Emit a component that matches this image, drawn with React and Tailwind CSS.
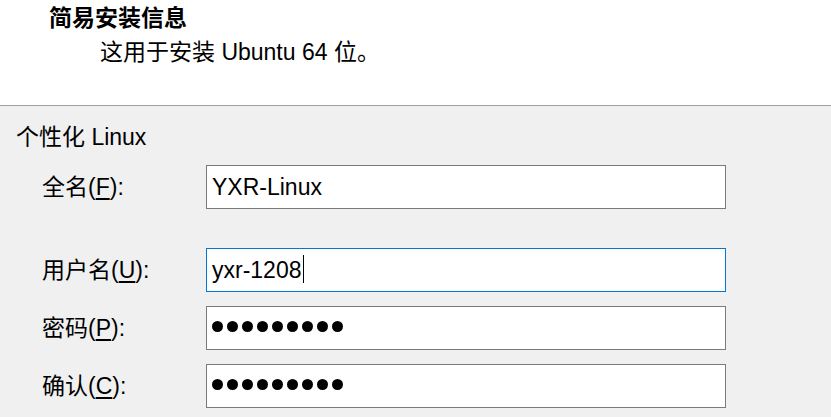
import React from 'react';

const font = { fontFamily: '"Liberation Sans", "Noto Sans CJK SC", sans-serif' };

const Dots = () => (
  <div className="flex items-center gap-[4px] pl-[5px] pb-[4px] h-full">
    {Array.from({ length: 9 }).map((_, i) => (
      <span key={i} className="block w-[11px] h-[11px] rounded-full bg-black" />
    ))}
  </div>
);

const Field = ({ label, letter, focused, children, className = '' }) => (
  <div className={`flex items-center ${className}`}>
    <div className="w-[164px] leading-[30px] text-black">
      {label}(<span className="underline underline-offset-[3px]">{letter}</span>):
    </div>
    <div
      className={`w-[520px] h-[44px] bg-white border ${
        focused ? 'border-[#0078d7]' : 'border-[#7a7a7a]'
      }`}
    >
      {children}
    </div>
  </div>
);

const App = () => {
  return (
    <div className="w-[831px] h-[417px] overflow-hidden bg-[#f0f0f0] text-[23px]" style={font}>
      {/* Header */}
      <div className="h-[106px] bg-white border-b border-[#a0a0a0] pt-[3px]">
        <div className="pl-[49px] leading-[30px] font-bold text-black">简易安装信息</div>
        <div className="pl-[100px] mt-[4px] leading-[30px] text-black">这用于安装 Ubuntu 64 位。</div>
      </div>

      {/* Form */}
      <div className="pt-[16px]">
        <div className="pl-[16px] leading-[30px] text-black">个性化 Linux</div>
        <div className="pl-[42px] mt-[13px] flex flex-col">
          <Field label="全名" letter="F">
            <div className="pl-[5px] leading-[42px]">YXR-Linux</div>
          </Field>
          <Field label="用户名" letter="U" focused className="mt-[39px]">
            <div className="pl-[5px] leading-[42px] flex items-center">
              <span>yxr-1208</span>
              <span className="block w-px h-[28px] bg-black ml-[2px] -mt-[2px]" />
            </div>
          </Field>
          <Field label="密码" letter="P" className="mt-[14px]">
            <Dots />
          </Field>
          <Field label="确认" letter="C" className="mt-[14px]">
            <Dots />
          </Field>
        </div>
      </div>
    </div>
  );
};

export default App;
